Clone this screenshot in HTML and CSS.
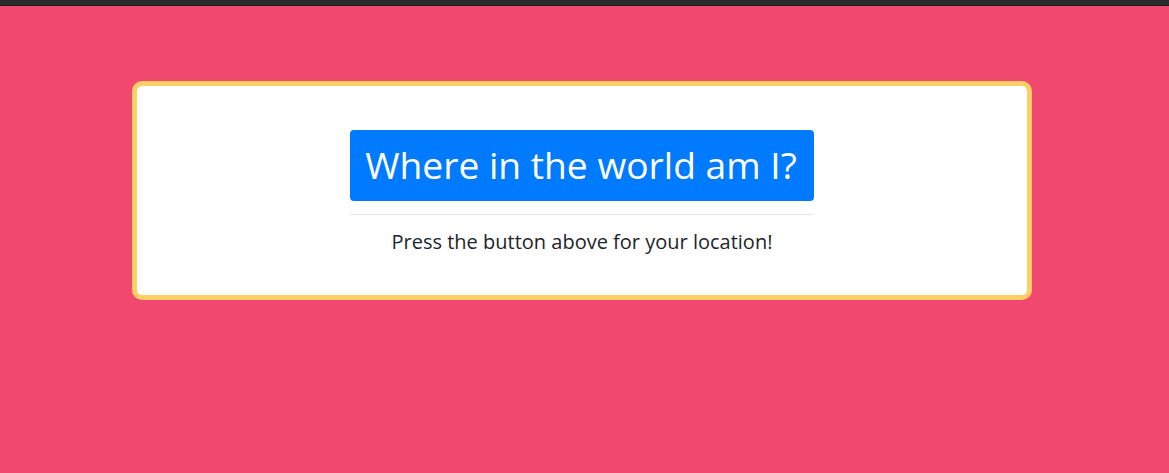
FILE: index.html
```html
<!DOCTYPE html>
<html>
<head>
<meta charset="utf-8">
<link rel="stylesheet" href="styles.css">
</head>
<body>
<div class="topbar"></div>
<main class="page">
  <section class="card">
    <div class="stack">
      <button class="locate-btn">Where in the world am I?</button>
      <hr class="divider">
      <p class="hint">Press the button above for your location!</p>
    </div>
  </section>
</main>
</body>
</html>
```

FILE: styles.css
```css
html, body {
  margin: 0;
  padding: 0;
}
body {
  background: #f0486e;
  font-family: "Open Sans", "Noto Sans", sans-serif;
  height: 473px;
  overflow: hidden;
}
.topbar {
  height: 5px;
  background: #2b2b2b;
  border-bottom: 1px solid #1a1a1a;
}
.page {
  padding: 75px 0 0 132px;
}
.card {
  box-sizing: border-box;
  width: 900px;
  height: 219px;
  background: #fff;
  border: 5px solid #ffcf66;
  border-radius: 10px;
  display: flex;
  justify-content: center;
  padding-top: 44px;
}
.stack {
  display: flex;
  flex-direction: column;
  align-items: stretch;
}
.locate-btn {
  font-family: "Open Sans", "Noto Sans", sans-serif;
  font-size: 37.2px;
  line-height: 55px;
  padding: 7px 17px 9px 15px;
  color: #fff;
  background: #007bff;
  border: none;
  border-radius: 4px;
  margin: 0;
}
.divider {
  margin: 13px 0 12px;
  border: 0;
  border-top: 1px solid #e6e6e6;
  height: 0;
}
.hint {
  margin: 0;
  font-size: 20px;
  line-height: 30px;
  color: #212529;
  text-align: center;
}
```
